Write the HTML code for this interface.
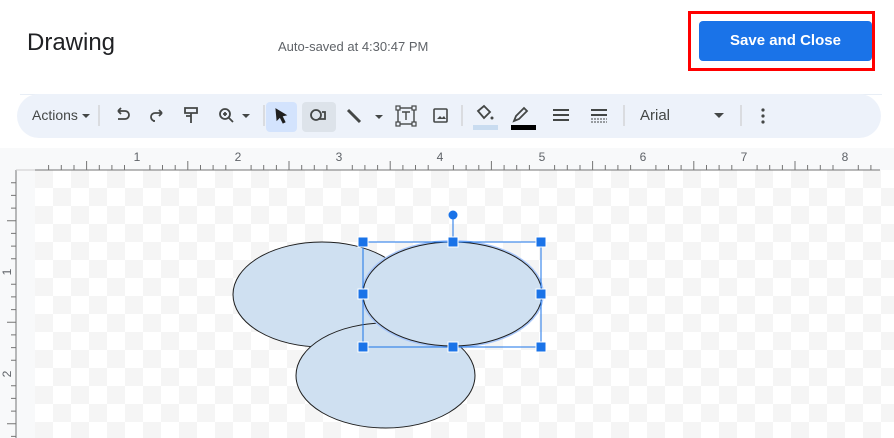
<!DOCTYPE html>
<html><head><style>
body{margin:0;width:894px;height:438px;overflow:hidden;background:#fff;font-family:"Liberation Sans",sans-serif;position:relative}
.abs{position:absolute}
</style></head><body>
<div class="abs" style="left:27px;top:29px;font-size:24px;color:#202124">Drawing</div>
<div class="abs" style="left:278px;top:39px;font-size:13px;color:#5f6368">Auto-saved at 4:30:47 PM</div>
<div class="abs" style="left:688px;top:11px;width:187px;height:60px;box-sizing:border-box;border:3px solid #f00"></div>
<div class="abs" style="left:699px;top:21px;width:173px;height:40px;background:#1a73e8;border-radius:4px;color:#fff;font-weight:bold;font-size:15px;line-height:40px;text-align:center">Save and Close</div>
<div class="abs" style="left:20px;top:94px;width:862px;height:1px;background:#e8eef6"></div>
<div class="abs" style="left:17px;top:94px;width:864px;height:44px;background:#edf2fa;border-radius:22px"></div>
<svg class="abs" style="left:0;top:90px" width="894" height="52" fill="none" stroke="#444746" stroke-width="1.8">
<text x="32" y="30" font-family="Liberation Sans" font-size="14" fill="#444746" stroke="none">Actions</text>
<path d="M82 24h8l-4 4z" fill="#444746" stroke="none"/>
<path d="M99 15v21M264 15v21M462 15v21M624 15v21M741 15v21" stroke="#c7c7c7" stroke-width="1"/>
<path d="M118 21h7a4 4 0 0 1 0 8h-7M118 21l3-3M118 21l3 3"/>
<path d="M162 23h-7a4 4 0 0 0 0 8h-2M162 23l-3-3M162 23l-3 3"/>
<path d="M185 18h12v5h-12zM191 23v3h-5M191 26v7" />
<circle cx="225" cy="24" r="5"/><path d="M229 28l4 4M223 24h4M225 22v4"/>
<path d="M242 24h8l-4 4z" fill="#444746" stroke="none"/>
<rect x="266" y="12" width="31" height="30" rx="4" fill="#d3e3fd" stroke="none"/>
<path d="M276 19l10 6-4 1 3 6-2 1-3-6-3 3z" fill="#1f1f1f" stroke="#1f1f1f" stroke-width="1"/>
<rect x="302" y="12" width="34" height="30" rx="4" fill="#dde3ea" stroke="none"/>
<circle cx="316" cy="25" r="5"/><path d="M318 29h7v-7h-3"/>
<path d="M348 20l12 12" stroke-width="3"/>
<path d="M375 25h8l-4 4z" fill="#444746" stroke="none"/>
<rect x="398" y="18" width="16" height="16" stroke-width="1.4"/><rect x="396" y="16" width="4" height="4" fill="#edf2fa" stroke-width="1.2"/><rect x="412" y="16" width="4" height="4" fill="#edf2fa" stroke-width="1.2"/><rect x="396" y="32" width="4" height="4" fill="#edf2fa" stroke-width="1.2"/><rect x="412" y="32" width="4" height="4" fill="#edf2fa" stroke-width="1.2"/>
<path d="M402 22h8M406 22v8" stroke-width="1.4"/>
<rect x="434" y="19" width="13" height="13" rx="1" stroke-width="1.6"/><path d="M437 29l3-3 2 2 2-2 2 3z" fill="#444746" stroke="none"/>
<path d="M478 21l6-5 6 6-6 6z" stroke-width="1.8"/><circle cx="492" cy="28" r="1.5" fill="#444746" stroke="none"/>
<rect x="473" y="35" width="25" height="5" fill="#c9dcf0" stroke="none"/>
<path d="M514 31l2-5 8-8 3 3-8 8z" stroke-width="1.8"/>
<rect x="511" y="35" width="25" height="5" fill="#000" stroke="none"/>
<path d="M553 20h16M553 25h16M553 30h16" stroke-width="2"/>
<path d="M591 20h16M591 25h16" stroke-width="2"/><path d="M591 29h16M591 32h16" stroke-width="1" stroke-dasharray="2 1"/>
<text x="640" y="30" font-family="Liberation Sans" font-size="15" fill="#444746" stroke="none">Arial</text>
<path d="M714 23h10l-5 5z" fill="#444746" stroke="none"/>
<circle cx="763" cy="20" r="1.6" fill="#444746" stroke="none"/><circle cx="763" cy="26" r="1.6" fill="#444746" stroke="none"/><circle cx="763" cy="32" r="1.6" fill="#444746" stroke="none"/>
</svg>
<svg class="abs" style="left:0;top:148px" width="894" height="290">
<defs>
<pattern id="ck" x="35" y="22" width="36" height="36" patternUnits="userSpaceOnUse">
<rect width="36" height="36" fill="#fff"/><rect width="18" height="18" fill="#f5f5f5"/><rect x="18" y="18" width="18" height="18" fill="#f5f5f5"/>
</pattern>
</defs>
<rect width="894" height="290" fill="#f8f9fa"/>
<rect x="35" y="22" width="859" height="268" fill="url(#ck)"/>
<path d="M16 22H880" stroke="#757575" stroke-width="1"/>
<path d="M16 22V290" stroke="#757575" stroke-width="1"/>
<path d="M16 22H35" stroke="#ccc" stroke-width="1"/>
<g font-family="Liberation Sans" font-size="12" fill="#5f6368" text-anchor="middle">
<text x="137" y="13">1</text><text x="238" y="13">2</text><text x="339" y="13">3</text><text x="440" y="13">4</text><text x="542" y="13">5</text><text x="643" y="13">6</text><text x="744" y="13">7</text><text x="845" y="13">8</text>
<text transform="translate(11 124) rotate(-90)">1</text><text transform="translate(11 226) rotate(-90)">2</text>
</g>
<path id="ticks" stroke="#757575" stroke-width="1" d=""/>
</svg>
<svg class="abs" style="left:0;top:0" width="894" height="438">
<g fill="#cfe0f1" stroke="#1f1f1f" stroke-width="1">
<ellipse cx="322" cy="294.5" rx="89" ry="52.5"/>
<ellipse cx="385.5" cy="375.5" rx="89.5" ry="52.5"/>
<ellipse cx="452.5" cy="294" rx="89.5" ry="52" stroke="#a8c7fa" stroke-width="4"/>
<ellipse cx="452.5" cy="294" rx="89.5" ry="52"/>
</g>
<g stroke="#1a73e8" stroke-width="1" fill="none">
<rect x="363" y="242" width="178" height="105"/><path d="M453 215v27"/>
</g>
<g fill="#1a73e8" stroke="#fff" stroke-width="1">
<circle cx="453" cy="215" r="4.5" stroke="none"/>
<rect x="358" y="237" width="10" height="10"/><rect x="448" y="237" width="10" height="10"/><rect x="536" y="237" width="10" height="10"/>
<rect x="358" y="289" width="10" height="10"/><rect x="536" y="289" width="10" height="10"/>
<rect x="358" y="342" width="10" height="10"/><rect x="448" y="342" width="10" height="10"/><rect x="536" y="342" width="10" height="10"/>
</g>
</svg>
<script>
var d="";
for(var i=0;i<=67;i++){var x=36+i*101.2/8;if(x>880)break;var big=i%8==0,mid=i%4==0;if(big)continue;d+="M"+x.toFixed(1)+" 22v-"+(mid?9:5);}
for(var i=1;i<=22;i++){var y=22+i*101.5/8;if(i%8==0)continue;var mid=i%4==0;d+="M16 "+y.toFixed(1)+"h-"+(mid?9:5);}
document.getElementById("ticks").setAttribute("d",d);
</script>
</body></html>
